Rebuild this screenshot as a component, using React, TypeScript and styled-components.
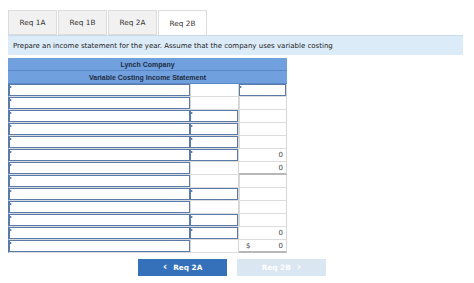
import styled, { createGlobalStyle } from 'styled-components';

const GlobalStyle = createGlobalStyle`
    html, body {
        margin: 0;
        padding: 0;
        background: #fff;
    }
    body {
        font-family: "DejaVu Sans", Verdana, sans-serif;
    }
`;

type Cell = 'input' | 'plain' | 'marker' | 'zero' | 'total'

type RowDef = {
    amount: Cell
    result: Cell
    subtotal?: boolean
}

const rows: RowDef[] = [
    { amount: 'plain', result: 'marker' },
    { amount: 'plain', result: 'plain' },
    { amount: 'input', result: 'plain' },
    { amount: 'input', result: 'plain' },
    { amount: 'input', result: 'plain' },
    { amount: 'input', result: 'zero' },
    { amount: 'plain', result: 'zero', subtotal: true },
    { amount: 'plain', result: 'plain' },
    { amount: 'input', result: 'plain' },
    { amount: 'plain', result: 'plain' },
    { amount: 'input', result: 'plain' },
    { amount: 'input', result: 'zero' },
    { amount: 'plain', result: 'total' },
]

const tabs = ['Req 1A', 'Req 1B', 'Req 2A', 'Req 2B']

const App = () => {
    return (
        <Page>
            <GlobalStyle />
            <TabBar>
                {tabs.map((t, i) => (
                    <Tab key={t} $active={i === tabs.length - 1}>{t}</Tab>
                ))}
            </TabBar>

            <Instructions>
                Prepare an income statement for the year. Assume that the company uses variable costing
            </Instructions>

            <Sheet>
                <HeadRow>Lynch Company</HeadRow>
                <HeadRow>Variable Costing Income Statement</HeadRow>
                {rows.map((r, i) => (
                    <Row key={i}>
                        <LabelCell><Field><Marker /></Field></LabelCell>
                        <NumCell>
                            {r.amount === 'input' ? <Field><Marker /></Field> : <Blank />}
                        </NumCell>
                        <NumCell $subtotal={r.subtotal} $total={r.result === 'total'}>
                            {r.result === 'marker' && <Field><Marker /></Field>}
                            {r.result === 'plain' && <Blank />}
                            {r.result === 'zero' && <Value>0</Value>}
                            {r.result === 'total' && <Value><span>$</span><span>0</span></Value>}
                        </NumCell>
                    </Row>
                ))}
            </Sheet>

            <Nav>
                <NavButton>
                    <Chevron>&#8249;</Chevron> Req 2A
                </NavButton>
                <NavButton $disabled>
                    Req 2B <Chevron>&#8250;</Chevron>
                </NavButton>
            </Nav>
        </Page>
    )
}

const Page = styled.div`
    width: 455px;
    padding: 10px 0 0 8px;
`;

const TabBar = styled.div`
    display: flex;
    height: 25px;
`;

const Tab = styled.div<{ $active?: boolean }>`
    width: 49px;
    height: 25px;
    box-sizing: border-box;
    margin-right: 1px;
    display: flex;
    align-items: center;
    justify-content: center;
    font-size: 7.3px;
    color: #333;
    background: ${p => p.$active ? '#fff' : '#f1f1f1'};
    border: 1px solid #dcdcdc;
    border-bottom: ${p => p.$active ? 'none' : '1px solid #dcdcdc'};
`;

const Instructions = styled.div`
    height: 20px;
    box-sizing: border-box;
    padding: 0 5px;
    display: flex;
    align-items: center;
    font-size: 7px;
    color: #222;
    background: #dcebf8;
    border-top: 1px solid #c9dbea;
`;

const Sheet = styled.div`
    width: 279px;
    margin-top: 3px;
    font-family: "Liberation Sans", Arial, sans-serif;
`;

const HeadRow = styled.div`
    height: 13px;
    box-sizing: border-box;
    display: flex;
    align-items: center;
    justify-content: center;
    font-size: 7px;
    font-weight: bold;
    color: #1e2d44;
    background: #71a0de;
    border-bottom: 1px solid #5a88c7;
`;

const Row = styled.div`
    display: grid;
    grid-template-columns: 182px 49px 48px;
    height: 13px;
`;

const LabelCell = styled.div`
    display: flex;
    border-bottom: 1px solid #d6dbe2;
    border-left: 1px solid #5c7aa6;
`;

const NumCell = styled.div<{ $subtotal?: boolean; $total?: boolean }>`
    display: flex;
    border-right: 1px solid #d6d6d6;
    border-bottom: ${p => p.$subtotal || p.$total ? '2px solid #b8b8b8' : '1px solid #dcdcdc'};
`;

const Field = styled.div`
    position: relative;
    flex: 1;
    background: #fff;
    border: 1px solid #5a7aaa;
`;

const Marker = styled.span`
    position: absolute;
    top: 1px;
    left: 0;
    width: 0;
    height: 0;
    border-top: 1.5px solid transparent;
    border-bottom: 1.5px solid transparent;
    border-left: 2.5px solid #2855a6;
`;

const Blank = styled.div`
    flex: 1;
    border-left: 1px solid #d8d8d8;
`;

const Value = styled.div`
    flex: 1;
    display: flex;
    align-items: center;
    justify-content: space-between;
    flex-direction: row-reverse;
    padding: 0 3px 0 7px;
    font-size: 7px;
    color: #444;
    font-family: "DejaVu Sans", Verdana, sans-serif;
    span:first-child { order: 2; }
`;

const Nav = styled.div`
    display: flex;
    gap: 10px;
    margin-top: 6px;
    padding-left: 130px;
`;

const NavButton = styled.div<{ $disabled?: boolean }>`
    width: 89px;
    height: 17px;
    display: flex;
    align-items: center;
    justify-content: center;
    gap: 6px;
    font-size: 7.3px;
    font-weight: bold;
    color: #fff;
    background: ${p => p.$disabled ? '#dbe6f3' : '#3571bb'};
`;

const Chevron = styled.span`
    font-size: 11px;
    line-height: 1;
    margin-top: -2px;
`;

export default App
